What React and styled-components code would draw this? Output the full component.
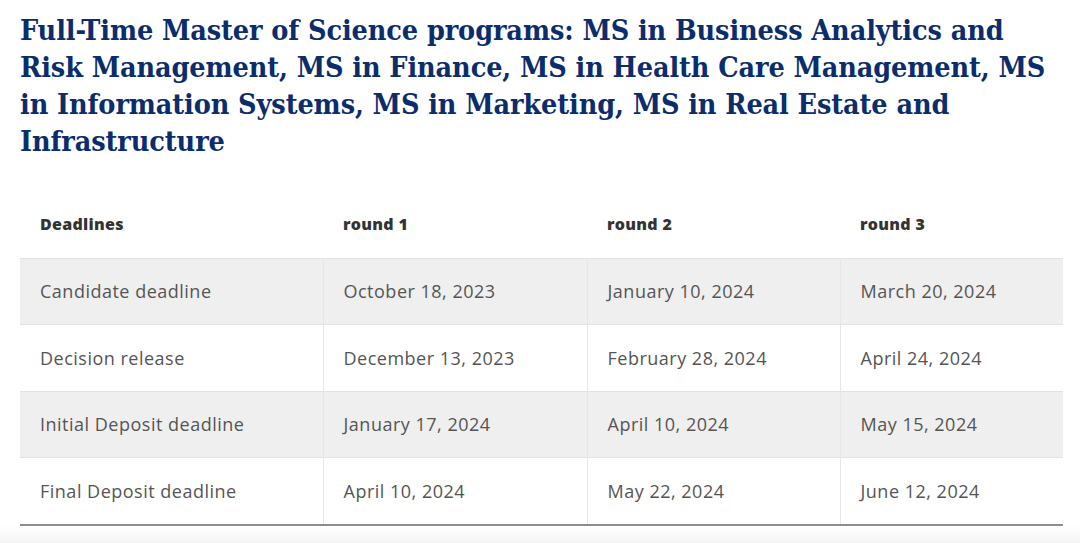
import styled, { createGlobalStyle } from "styled-components"

const GlobalStyle = createGlobalStyle`
    body {
        margin: 0;
        background: #ffffff;
    }
`

export const Page = styled.div`
    padding: 12px 17px 0 20px;
    background: linear-gradient(to bottom, #ffffff 525px, #f4f4f4 543px);
    min-height: 543px;
    box-sizing: border-box;
`

export const Heading = styled.h2`
    margin: 0;
    font-family: "DejaVu Serif Condensed", "DejaVu Serif", serif;
    font-stretch: condensed;
    font-weight: bold;
    font-size: 28.5px;
    letter-spacing: -0.1px;
    line-height: 37px;
    color: #0b2d6c;
`

export const Table = styled.table`
    margin-top: 30px;
    width: 100%;
    table-layout: fixed;
    border-collapse: collapse;
    font-family: "Open Sans", "Liberation Sans", sans-serif;
    border-bottom: 2px solid #8d8d8d;
`

export const HeadCell = styled.th`
    box-sizing: border-box;
    height: 68px;
    padding: 0 20px;
    text-align: left;
    font-size: 16px;
    font-weight: 800;
    letter-spacing: 0.3px;
    color: #333333;
    white-space: nowrap;
    width: ${ (props) => props.$width || "auto" };
`

export const Row = styled.tr`
    background-color: ${ (props) => props.$striped ? "#efefef" : "#ffffff" };
    border-top: 1px solid #e2e2e2;
`

export const Cell = styled.td`
    height: 65.5px;
    padding: 0 20px;
    font-size: 18px;
    letter-spacing: 0.5px;
    color: #555555;
    white-space: nowrap;
    border-left: 1px solid #e6e6e6;
    &:first-child {
        border-left: none;
    }
`

const rows = [
    ["Candidate deadline", "October 18, 2023", "January 10, 2024", "March 20, 2024"],
    ["Decision release", "December 13, 2023", "February 28, 2024", "April 24, 2024"],
    ["Initial Deposit deadline", "January 17, 2024", "April 10, 2024", "May 15, 2024"],
    ["Final Deposit deadline", "April 10, 2024", "May 22, 2024", "June 12, 2024"],
]

export default function App() {
  return (
    <Page>
        <GlobalStyle />
        <Heading>
            Full-Time Master of Science programs: MS in Business Analytics and Risk Management, MS in Finance, MS in Health Care Management, MS in Information Systems, MS in Marketing, MS in Real Estate and Infrastructure
        </Heading>
        <Table>
            <thead>
                <tr>
                    <HeadCell $width="303px">Deadlines</HeadCell>
                    <HeadCell $width="264px">round 1</HeadCell>
                    <HeadCell $width="253px">round 2</HeadCell>
                    <HeadCell>round 3</HeadCell>
                </tr>
            </thead>
            <tbody>
                {rows.map((row, i) => (
                    <Row key={row[0]} $striped={i % 2 === 0}>
                        {row.map((text, j) => (
                            <Cell key={j}>{text}</Cell>
                        ))}
                    </Row>
                ))}
            </tbody>
        </Table>
    </Page>
  )
}
